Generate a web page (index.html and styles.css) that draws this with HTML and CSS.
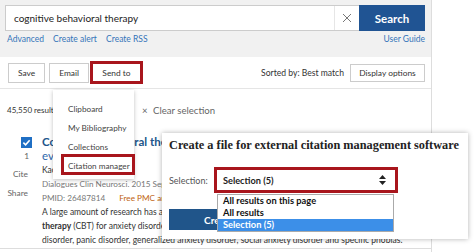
FILE: index.html
```html
<!DOCTYPE html>
<html lang="en">
<head>
    <meta charset="UTF-8">
    <title>PubMed - Send to citation manager</title>
    <link rel="stylesheet" href="styles.css">
</head>
<body>
<div class="page">
    <div class="search-area">
        <div class="search-row">
            <div class="search-box">
                <span class="query">cognitive behavioral therapy</span>
                <span class="clear"><svg width="10" height="10" viewBox="0 0 10 10"><path d="M1 1 L9 9 M9 1 L1 9" stroke="#777" stroke-width="1"/></svg></span>
            </div>
            <button class="search-btn">Search</button>
        </div>
        <div class="links-row">
            <div class="links">
                <a href="#">Advanced</a>
                <a href="#">Create alert</a>
                <a href="#">Create RSS</a>
            </div>
            <a href="#">User Guide</a>
        </div>
    </div>

    <div class="toolbar">
        <div class="actions">
            <button class="btn">Save</button>
            <button class="btn">Email</button>
            <span class="mark"><button class="btn">Send to</button></span>
        </div>
        <div class="sorting">
            <span>Sorted by: Best match</span>
            <button class="btn">Display options</button>
        </div>
    </div>

    <div class="results">
        <div class="results-bar">
            <span class="count">45,550 results</span>
            <span class="clear-sel"><span class="x">&times;</span> Clear selection</span>
        </div>

        <div class="article">
            <div class="side">
                <span class="check"><svg width="9" height="9" viewBox="0 0 10 10"><path d="M1.5 5.2 L4 7.5 L8.5 2.5" fill="none" stroke="#fff" stroke-width="1.8"/></svg></span>
                <span class="num">1</span>
                <span class="cite-link">Cite</span>
                <span class="share">Share</span>
            </div>
            <div class="body">
                <a href="#" class="title"><b>Cognitive behavioral therapy</b> for anxiety disorders: an update on the empirical evidence.</a>
                <div class="authors">Kaczkurkin AN, Foa EB.</div>
                <div class="cite">Dialogues Clin Neurosci. 2015 Sep;17(3):337-46.</div>
                <div class="cite">PMID: 26487814 <span class="free">Free PMC article.</span> Review.</div>
                <p class="snippet">A large amount of research has accumulated over recent decades on the efficacy of cognitive behavioral <b>therapy</b> (CBT) for anxiety disorders including obsessive-compulsive disorder, posttraumatic stress disorder, panic disorder, generalized anxiety disorder, social anxiety disorder and specific phobias.</p>
            </div>
        </div>
    </div>
</div>

<div class="menu">
    <div class="item">Clipboard</div>
    <div class="item">My Bibliography</div>
    <div class="item">Collections</div>
    <div class="item">Citation manager</div>
</div>
<div class="mark-box"></div>

<div class="modal">
    <h2>Create a file for external citation management software</h2>
    <div class="field">
        <label>Selection:</label>
        <div class="select-wrap">
            <div class="select">
                <span>Selection (5)</span>
                <svg width="7" height="10" viewBox="0 0 7 10"><path d="M3.5 0 L7 4 H0 Z M0 6 H7 L3.5 10 Z" fill="#222"/></svg>
            </div>
        </div>
    </div>
    <button class="create">Create file</button>
    <div class="options">
        <div>All results on this page</div>
        <div>All results</div>
        <div class="picked">Selection (5)</div>
    </div>
</div>
</body>
</html>
```

FILE: styles.css
```css
body {
    margin: 0;
    width: 474px;
    height: 252px;
    overflow: hidden;
    position: relative;
    font-family: Lato, "Open Sans", Arial, sans-serif;
    color: #333;
    background: #fff;
}
a {
    color: #3474b9;
    text-decoration: none;
}
.page {
    width: 431px;
    height: 252px;
    border-right: 1px solid #ddd;
}

/* search header */
.search-area {
    background: #f1f1f1;
    height: 57px;
    padding: 5px 6px 0 5px;
    box-sizing: border-box;
}
.search-row {
    display: flex;
    height: 26px;
}
.search-box {
    flex: 1;
    display: flex;
    align-items: center;
    background: #fff;
    border: 1px solid #ccc;
    border-right: none;
    padding-left: 8px;
    font-size: 10px;
    color: #222;
}
.query {
    flex: 1;
}
.clear {
    width: 24px;
    height: 24px;
    display: flex;
    align-items: center;
    justify-content: center;
    border-left: 1px solid #e6e6e6;
}
.search-btn {
    width: 66px;
    border: none;
    background: #205493;
    color: #fff;
    font-family: inherit;
    font-weight: bold;
    font-size: 11.5px;
}
.links-row {
    display: flex;
    justify-content: space-between;
    margin-top: 3px;
    padding-left: 2px;
    font-size: 8.5px;
}
.links a {
    margin-right: 7px;
}

/* toolbar */
.toolbar {
    height: 32px;
    display: flex;
    align-items: center;
    justify-content: space-between;
    padding: 0 6px 0 8px;
    border-bottom: 1px solid #e5e5e5;
    box-sizing: border-box;
}
.actions {
    display: flex;
    align-items: center;
    gap: 4px;
}
.btn {
    height: 20px;
    padding: 0 9px;
    border: 1px solid #ccc;
    background: #fff;
    font-family: inherit;
    font-size: 8.4px;
    color: #333;
}
.mark {
    display: flex;
    border: 3px solid #a8151c;
    margin-left: -3px;
}
.mark .btn {
    border: none;
    height: 17px;
    width: 47px;
    padding: 0;
}
.sorting {
    display: flex;
    align-items: center;
    gap: 6px;
    font-size: 8.6px;
}
.sorting .btn {
    height: 18px;
    width: 75px;
    padding: 0;
}

/* results */
.results-bar {
    display: flex;
    align-items: center;
    height: 42px;
    padding-left: 7px;
    font-size: 8px;
}
.count {
    width: 135px;
}
.clear-sel {
    font-size: 9.6px;
    color: #666;
}
.clear-sel .x {
    margin-right: 3px;
}
.article {
    display: flex;
    margin-top: 4px;
    height: 113px;
    border-bottom: 1px solid #ddd;
}
.side {
    width: 28px;
    display: flex;
    flex-direction: column;
    align-items: flex-end;
    font-size: 8.4px;
    line-height: 14px;
    color: #666;
}
.check {
    width: 11px;
    height: 11px;
    background: #1f6fc4;
    display: flex;
    align-items: center;
    justify-content: center;
    margin: 2px -4px 0 0;
}
.num {
    margin: 1px -1px 0 0;
}
.cite-link {
    margin-top: 4px;
}
.share {
    margin-top: 5px;
}
.body {
    margin-left: 14px;
    width: 385px;
}
.title {
    display: block;
    width: 398px;
    font-size: 11.5px;
    line-height: 14px;
    color: #2f67ab;
}
.title b {
    color: #20558a;
}
.authors {
    font-size: 8.5px;
    line-height: 14px;
}
.cite {
    font-size: 8.2px;
    line-height: 14px;
    color: #777;
}
.free {
    color: #c0630f;
    margin-left: 12px;
}
.snippet {
    margin: 0;
    font-size: 8.5px;
    line-height: 14px;
    color: #333;
}

/* send to menu */
.menu {
    position: absolute;
    left: 53px;
    top: 90px;
    width: 81px;
    height: 89px;
    background: #fff;
    box-shadow: 0 1px 4px rgba(0, 0, 0, 0.25);
    padding-top: 10px;
    box-sizing: border-box;
}
.item {
    height: 19px;
    line-height: 19px;
    padding-left: 15px;
    font-size: 8.2px;
    color: #444;
    white-space: nowrap;
}
.mark-box {
    position: absolute;
    left: 61px;
    top: 154px;
    width: 74px;
    height: 21px;
    border: 3px solid #a8151c;
    box-sizing: border-box;
}

/* citation manager dialog */
.modal {
    position: absolute;
    left: 162px;
    top: 133px;
    width: 306px;
    height: 106px;
    background: #fff;
    box-shadow: 0 0 5px rgba(0, 0, 0, 0.3);
    padding: 0 7px;
    box-sizing: border-box;
}
.modal h2 {
    margin: 4px 0 0;
    font-family: "Liberation Serif", "Times New Roman", serif;
    font-size: 12.3px;
    line-height: 16px;
    font-weight: bold;
    color: #222;
    white-space: nowrap;
}
.field {
    display: flex;
    align-items: center;
    margin-top: 14px;
}
.field label {
    width: 45px;
    font-size: 9px;
    color: #555;
}
.select-wrap {
    width: 184px;
    height: 26px;
    border: 3px solid #a8151c;
    box-sizing: border-box;
}
.select {
    height: 20px;
    display: flex;
    align-items: center;
    justify-content: space-between;
    padding: 0 9px 0 6px;
    font-size: 9.2px;
    font-weight: bold;
    color: #222;
}
.create {
    display: block;
    margin-top: 16px;
    width: 116px;
    height: 21px;
    border: none;
    background: #20558a;
    color: #fff;
    font-family: inherit;
    font-weight: bold;
    font-size: 10px;
}
.options {
    position: absolute;
    left: 55px;
    top: 61px;
    width: 177px;
    background: #fff;
    border: 1px solid #aaa;
    box-sizing: border-box;
    font-size: 9.3px;
    font-weight: bold;
    color: #111;
}
.options div {
    height: 12px;
    line-height: 12px;
    padding-left: 5px;
}
.options .picked {
    background: #3c8fe8;
    color: #fff;
}
```
